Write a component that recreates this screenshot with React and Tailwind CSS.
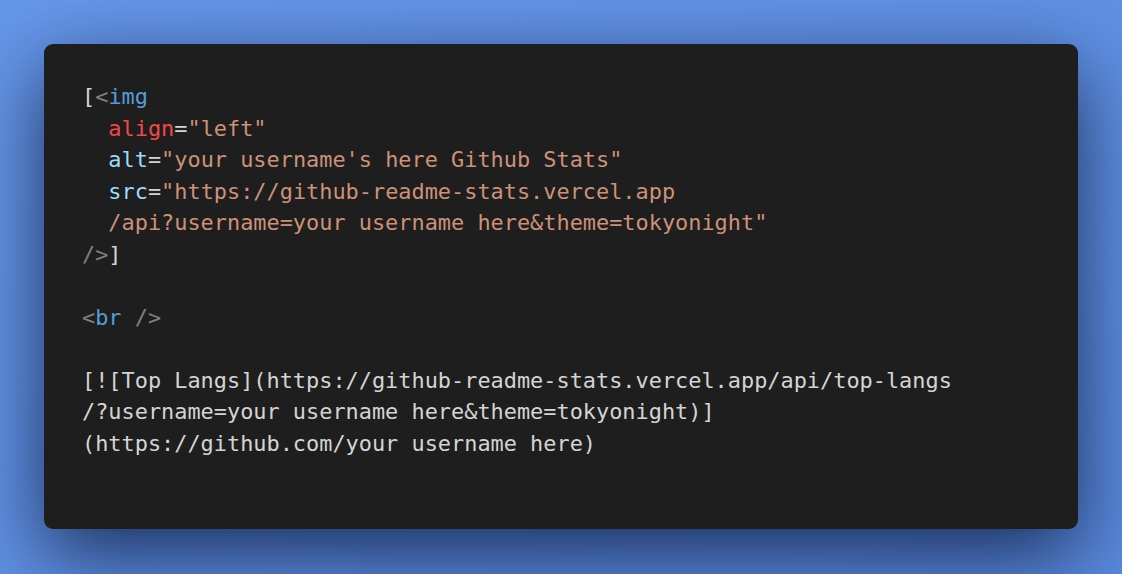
export default function App() {
  const P = "text-[#808080]";
  const W = "text-[#d4d4d4]";
  const T = "text-[#569cd6]";
  const A = "text-[#9cdcfe]";
  const S = "text-[#ce9178]";
  const R = "text-[#f44747]";
  return (
    <div className="w-[1122px] h-[574px] bg-gradient-to-br from-[#6697e9] to-[#5a8ade] p-[44px] overflow-hidden">
      <div className="w-[1034px] h-[485px] bg-[#1e1e1e] rounded-[9px] shadow-[0_26px_80px_rgba(5,15,45,0.75)] pt-[37px] pl-[38px]">
        <pre className="font-['DejaVu_Sans_Mono',monospace] text-[21.9px] leading-[31.5px] whitespace-pre m-0">
          <div><span className={W}>[</span><span className={P}>&lt;</span><span className={T}>img</span></div>
          <div>  <span className={R}>align</span><span className={W}>=</span><span className={S}>"left"</span></div>
          <div>  <span className={A}>alt</span><span className={W}>=</span><span className={S}>"your username's here Github Stats"</span></div>
          <div>  <span className={A}>src</span><span className={W}>=</span><span className={S}>"https://github-readme-stats.vercel.app</span></div>
          <div>  <span className={S}>/api?username=your username here&amp;theme=tokyonight"</span></div>
          <div><span className={P}>/&gt;</span><span className={W}>]</span></div>
          <div> </div>
          <div><span className={P}>&lt;</span><span className={T}>br</span><span className={P}> /&gt;</span></div>
          <div> </div>
          <div className={W}>[![Top Langs](https://github-readme-stats.vercel.app/api/top-langs</div>
          <div className={W}>/?username=your username here&amp;theme=tokyonight)]</div>
          <div className={W}>(https://github.com/your username here)</div>
        </pre>
      </div>
    </div>
  );
}
